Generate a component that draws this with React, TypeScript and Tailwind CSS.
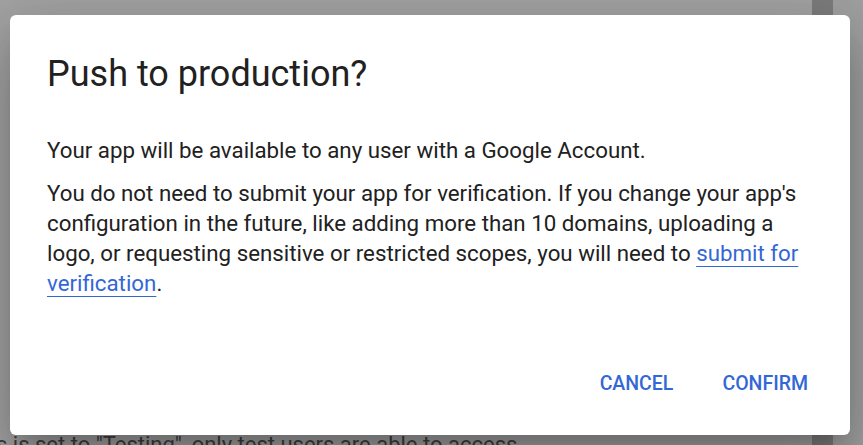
import React from "react";

export default function App() {
  return (
    <div
      className="relative w-[863px] h-[445px] overflow-hidden bg-[#a3a3a3]"
      style={{ fontFamily: "Roboto, 'Liberation Sans', sans-serif" }}
    >
      {/* background page (under scrim) */}
      <div className="flex h-full w-full">
        <div className="flex-1 pt-[430px]">
          <p className="ml-[-4px] whitespace-nowrap text-[22px] leading-[30px] text-[#3f3f3f]">
            s is set to "Testing", only test users are able to access
          </p>
        </div>
        <div className="w-[21px] h-full bg-[#7c7c7c]" />
        <div className="w-[30px] h-full bg-[#a0a0a0]" />
      </div>

      {/* dialog overlay */}
      <div className="absolute left-[10px] top-[15px] flex h-[420px] w-[840px] flex-col rounded-[6px] bg-white pl-[37px] pr-[34px] pt-[35px] shadow-[0_16px_22px_-10px_rgba(0,0,0,0.2),0_36px_57px_4px_rgba(0,0,0,0.14),0_13px_69px_12px_rgba(0,0,0,0.12)]">
        <h2 className="text-[36px] font-normal leading-[48px] text-[#212121]">
          Push to production?
        </h2>
        <div className="mt-[37px] text-[22.3px] leading-[30px] text-[#212121]">
          <p>Your app will be available to any user with a Google Account.</p>
          <p className="mt-[13px]">
            You do not need to submit your app for verification. If you change your app's
            configuration in the future, like adding more than 10 domains, uploading a
            logo, or requesting sensitive or restricted scopes, you will need to{" "}
            <a
              href="#"
              className="text-[#3367d6] underline decoration-[1px] underline-offset-[5px]"
            >
              submit for verification
            </a>
            .
          </p>
        </div>
        <div className="mt-auto mr-[-4px] flex justify-end gap-[25px] pb-[24px]">
          <button className="flex h-[54px] items-center px-3 text-[19.5px] font-medium uppercase leading-[30px] text-[#3367d6]">
            Cancel
          </button>
          <button className="flex h-[54px] items-center px-3 text-[19.5px] font-medium uppercase leading-[30px] text-[#3367d6]">
            Confirm
          </button>
        </div>
      </div>
    </div>
  );
}
